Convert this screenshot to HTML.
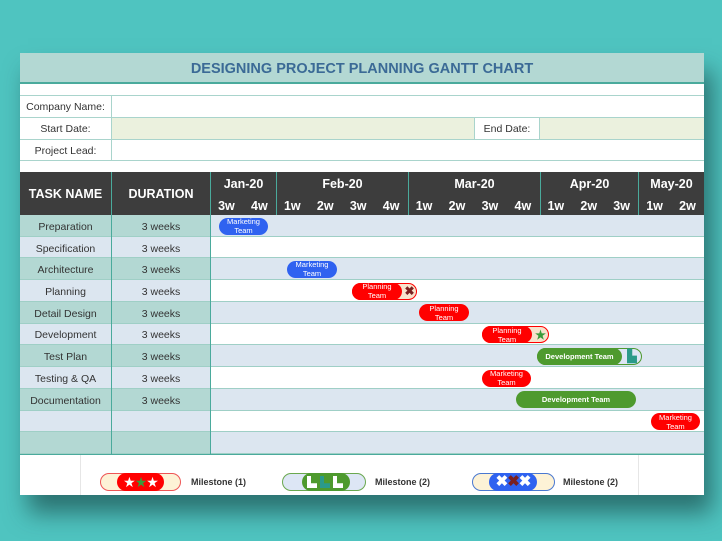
<!DOCTYPE html>
<html><head><meta charset="utf-8"><style>
*{margin:0;padding:0;box-sizing:border-box}
body{width:722px;height:541px;background:#4fc4c0;font-family:"Liberation Sans",sans-serif;position:relative;overflow:hidden}
.a{position:absolute}
.card{left:20px;top:53px;width:684px;height:442px;background:#fff;box-shadow:8px 18px 22px rgba(20,60,60,.6)}
.t{font-size:10.5px;color:#333;display:flex;align-items:center;justify-content:center}
.bar{position:absolute;border-radius:9px;color:#fff;font-size:7.5px;line-height:9px;text-align:center;display:flex;align-items:center;justify-content:center;height:17px}
.hd{color:#fff;font-weight:bold;display:flex;align-items:center;justify-content:center}
</style></head><body>
<div class="a card"></div>
<div class="a" style="left:20px;top:53px;width:684px;height:31px;background:#b3d8d3;border-bottom:2px solid #4aaa9c"></div>
<div class="a hd" style="left:20px;top:53px;width:684px;height:31px;color:#3b6a96;font-size:14.5px">DESIGNING PROJECT PLANNING GANTT CHART</div>
<div class="a" style="left:20px;top:95px;width:684px;height:66px;border-top:1px solid #a9d4cc"></div>
<div class="a" style="left:20px;top:117px;width:684px;border-top:1px solid #a9d4cc"></div>
<div class="a" style="left:20px;top:139px;width:684px;border-top:1px solid #a9d4cc"></div>
<div class="a" style="left:20px;top:160px;width:684px;border-top:1px solid #a9d4cc"></div>
<div class="a" style="left:111px;top:95px;width:1px;height:66px;background:#a9d4cc"></div>
<div class="a" style="left:112px;top:118px;width:362px;height:21px;background:#ebf1de"></div>
<div class="a" style="left:540px;top:118px;width:164px;height:21px;background:#ebf1de"></div>
<div class="a" style="left:474px;top:118px;width:1px;height:21px;background:#a9d4cc"></div>
<div class="a" style="left:539px;top:118px;width:1px;height:21px;background:#a9d4cc"></div>
<div class="a t" style="left:20px;top:96px;width:91px;height:21px">Company Name:</div>
<div class="a t" style="left:20px;top:118px;width:91px;height:21px">Start Date:</div>
<div class="a t" style="left:20px;top:140px;width:91px;height:21px">Project Lead:</div>
<div class="a t" style="left:475px;top:118px;width:64px;height:21px">End Date:</div>
<div class="a" style="left:20px;top:172px;width:684px;height:43px;background:#3d3d3d"></div>
<div class="a hd" style="left:20px;top:172px;width:91px;height:43px;font-size:12.5px">TASK NAME</div>
<div class="a hd" style="left:112px;top:172px;width:98px;height:43px;font-size:12.5px">DURATION</div>
<div class="a" style="left:111px;top:172px;width:1px;height:282px;background:#4aaa9c"></div>
<div class="a" style="left:210px;top:172px;width:1px;height:282px;background:#4aaa9c"></div>
<div id="hdr"></div>
<div id="rows"></div>
<div class="a" style="left:20px;top:454px;width:684px;height:41px;border-top:1px solid #4aaa9c"></div>
<div class="a" style="left:80px;top:455px;width:1px;height:40px;background:#e6e6e6"></div>
<div class="a" style="left:638px;top:455px;width:1px;height:40px;background:#e6e6e6"></div>

<div class="a" style="left:100px;top:473px;width:81px;height:18px;border:1px solid #e55;border-radius:9px;background:#fdf2d6"></div>
<div class="a" style="left:117px;top:473px;width:47px;height:18px;border-radius:9px;background:#f00;color:#fff;font-size:14px;line-height:18px;text-align:center;letter-spacing:-1px">★<span style="color:#3a9a3a">★</span>★</div>
<div class="a" style="left:191px;top:474px;font-size:9px;font-weight:bold;color:#333;line-height:16px">Milestone (1)</div>

<div class="a" style="left:282px;top:473px;width:84px;height:18px;border:1px solid #6aa84f;border-radius:9px;background:#dde6f5"></div>
<div class="a" style="left:302px;top:473px;width:48px;height:18px;border-radius:9px;background:#4e9a2e"></div>
<div class="a" style="left:307px;top:476px;width:10px;height:12px;background:#fff;clip-path:polygon(0 0,40% 0,40% 60%,100% 60%,100% 100%,0 100%)"></div>
<div class="a" style="left:320px;top:476px;width:10px;height:12px;background:#2a9a8a;clip-path:polygon(0 0,40% 0,40% 60%,100% 60%,100% 100%,0 100%)"></div>
<div class="a" style="left:333px;top:476px;width:10px;height:12px;background:#fff;clip-path:polygon(0 0,40% 0,40% 60%,100% 60%,100% 100%,0 100%)"></div>
<div class="a" style="left:375px;top:474px;font-size:9px;font-weight:bold;color:#333;line-height:16px">Milestone (2)</div>

<div class="a" style="left:472px;top:473px;width:83px;height:18px;border:1px solid #4a78d0;border-radius:9px;background:#fdf2d6"></div>
<div class="a" style="left:489px;top:473px;width:48px;height:18px;border-radius:9px;background:#2f62f0;color:#fff;font-size:15px;line-height:18px;text-align:center;font-weight:bold;letter-spacing:-1px">✖<span style="color:#7a2020">✖</span>✖</div>
<div class="a" style="left:563px;top:474px;font-size:9px;font-weight:bold;color:#333;line-height:16px">Milestone (2)</div>

<script>
var h='';
var months=[['Jan-20',210,276],['Feb-20',276,408],['Mar-20',408,540],['Apr-20',540,638],['May-20',638,704]];
months.forEach(function(m){h+='<div class="a hd" style="left:'+m[1]+'px;top:172px;width:'+(m[2]-m[1])+'px;height:24px;font-size:12.5px;border-left:1px solid #4aaa9c">'+m[0]+'</div>';});
var wk=['3w','4w','1w','2w','3w','4w','1w','2w','3w','4w','1w','2w','3w','1w','2w'];
var w=494/15;
wk.forEach(function(x,i){h+='<div class="a hd" style="left:'+(210+i*w)+'px;top:196px;width:'+w+'px;height:19px;font-size:12.5px">'+x+'</div>';});
[276,408,540,638].forEach(function(x){h+='<div class="a" style="left:'+x+'px;top:172px;width:1px;height:43px;background:#4aaa9c"></div>';});
document.getElementById('hdr').innerHTML=h;
var tasks=['Preparation','Specification','Architecture','Planning','Detail Design','Development','Test Plan','Testing & QA','Documentation','',''];
var r='',rh=239/11;
tasks.forEach(function(t,i){
 var y=215+i*rh,odd=i%2==0;
 var tc=odd?'#b3d8d3':'#dce6f0';
 var gc=odd?'#dce6f0':'#fff';
 if(i==10){tc='#b3d8d3';gc='#dce6f0';}
 r+='<div class="a" style="left:20px;top:'+y+'px;width:91px;height:'+rh+'px;background:'+tc+';border-bottom:1px solid #9fcfc6"></div>';
 r+='<div class="a" style="left:112px;top:'+y+'px;width:98px;height:'+rh+'px;background:'+tc+';border-bottom:1px solid #9fcfc6"></div>';
 r+='<div class="a" style="left:211px;top:'+y+'px;width:493px;height:'+rh+'px;background:'+gc+';border-bottom:1px solid #9fcfc6"></div>';
 if(t){r+='<div class="a t" style="left:20px;top:'+(y+1)+'px;width:91px;height:'+rh+'px">'+t+'</div>';
 r+='<div class="a t" style="left:112px;top:'+(y+1)+'px;width:98px;height:'+rh+'px">3 weeks</div>';}
});
function bar(i,x1,x2,c,txt,ext,ec,ic){
 var y=215+i*rh+2.5;
 if(ext){r+='<div class="bar" style="left:'+x1+'px;top:'+y+'px;width:'+(ext-x1)+'px;background:'+ec+';border:1px solid '+c+'"></div>';
 r+='<div class="a" style="left:'+(x2+2)+'px;top:'+y+'px;width:'+(ext-x2-4)+'px;height:17px;display:flex;align-items:center;justify-content:center;font-size:12px;font-weight:bold;color:'+ic[1]+'">'+ic[0]+'</div>';}
 r+='<div class="bar" style="left:'+x1+'px;top:'+y+'px;width:'+(x2-x1)+'px;background:'+c+'">'+txt+'</div>';
}
var MT='Marketing<br>Team',PT='Planning<br>Team';
bar(0,219,268,'#2f62f0',MT);
bar(2,287,337,'#2f62f0',MT);
bar(3,352,402,'#f00',PT,417,'#f7e2cc',['✖','#7a2020']);
bar(4,419,469,'#f00',PT);
bar(5,482,532,'#f00',PT,549,'#f7e2cc',['★','#3a9a3a']);
bar(6,537,622,'#4e9a2e','<b>Development Team</b>',642,'#dde6f5',['▙','#2a9a8a']);
bar(7,482,531,'#f00',MT);
bar(8,516,636,'#4e9a2e','<b>Development Team</b>');
bar(9,651,700,'#f00',MT);
document.getElementById('rows').innerHTML=r;
</script>
</body></html>
